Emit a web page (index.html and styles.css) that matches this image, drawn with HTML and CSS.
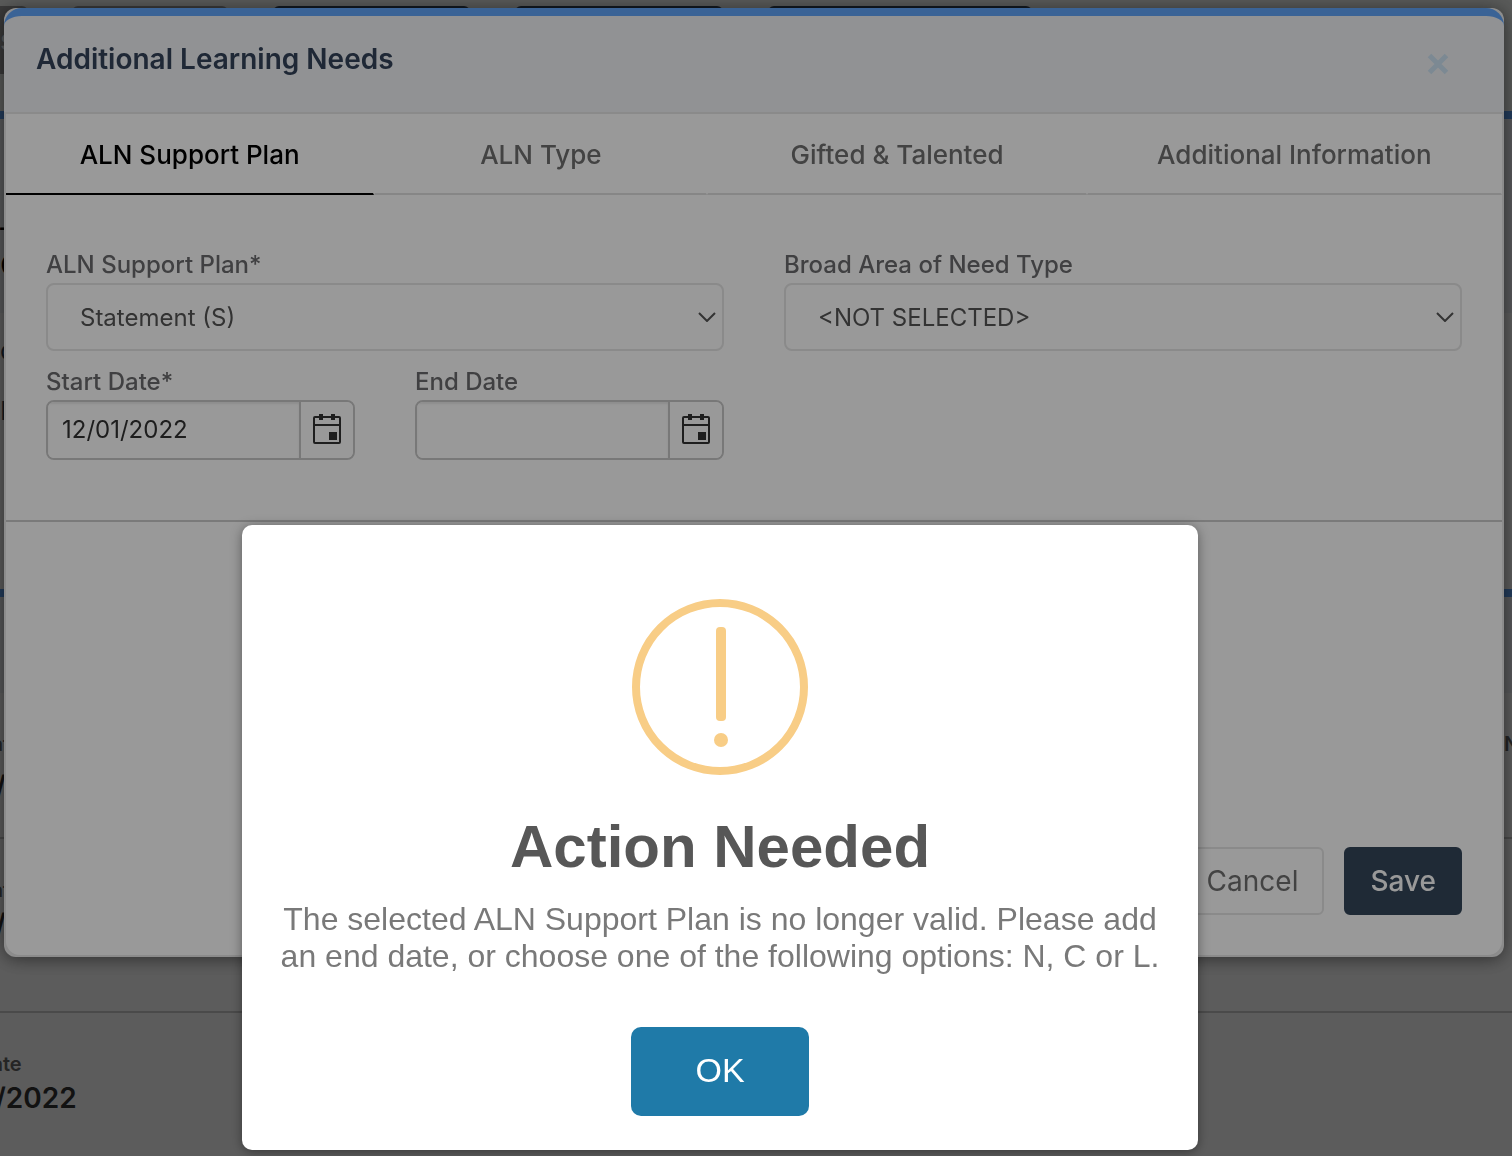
FILE: index.html
```
<!DOCTYPE html>
<html lang="en">
<head>
    <meta charset="UTF-8">
    <meta name="viewport" content="width=device-width, initial-scale=1.0">
    <title>Additional Learning Needs</title>
    <link rel="stylesheet" href="styles.css">
</head>
<body>

    <!-- Page behind the modal -->
    <main class="page">
        <div class="toolbar">
            <button class="tool tool-first" type="button">s</button>
            <button class="tool tool-grey" type="button" aria-label="Previous"></button>
            <button class="tool tool-a" type="button" aria-label="Edit"></button>
            <button class="tool tool-b" type="button" aria-label="Print"></button>
            <button class="tool tool-c" type="button" aria-label="Export"></button>
        </div>

        <section class="card">
            <div class="card-header">
                <span class="card-line">–</span>
                <span class="card-line">C</span>
            </div>
            <div class="card-body">
                <span>c</span>
                <span>I</span>
            </div>
        </section>

        <section class="card records">
            <div class="card-header short"></div>
            <div class="record first">
                <div class="record-cell"><span class="record-label">Start Date</span><span class="record-value">12/01/2022</span></div>
                <div class="record-cell last"><span class="record-label">N</span></div>
            </div>
            <div class="record">
                <div class="record-cell"><span class="record-label">Start Date</span><span class="record-value">12/01/2022</span></div>
            </div>
            <div class="record">
                <div class="record-cell"><span class="record-label">Start Date</span><span class="record-value">12/01/2022</span></div>
            </div>
        </section>
    </main>

    <!-- Modal -->
    <div class="backdrop">
        <div class="modal" role="dialog" aria-labelledby="modalTitle">
            <header class="modal-header">
                <h1 id="modalTitle">Additional Learning Needs</h1>
                <button class="close" type="button" aria-label="Close">
                    <svg width="22" height="22" viewBox="0 0 22 22"><path d="M2.5 2.5L19.5 19.5M19.5 2.5L2.5 19.5" fill="none" stroke="currentColor" stroke-width="5"/></svg>
                </button>
            </header>

            <div class="modal-content">
                <nav class="tabs">
                    <a class="active" href="#support-plan">ALN Support Plan</a>
                    <a href="#type">ALN Type</a>
                    <a href="#gifted">Gifted &amp; Talented</a>
                    <a href="#info">Additional Information</a>
                </nav>

                <form class="form" id="support-plan">
                    <div class="field wide">
                        <label for="plan">ALN Support Plan*</label>
                        <div class="select-box">
                            <select id="plan">
                                <option>Statement (S)</option>
                            </select>
                            <svg class="chevron" width="18" height="10" viewBox="0 0 18 10"><path d="M1 1L9 9L17 1" fill="none" stroke="currentColor" stroke-width="2"/></svg>
                        </div>
                    </div>
                    <div class="field wide">
                        <label for="need">Broad Area of Need Type</label>
                        <div class="select-box">
                            <select id="need">
                                <option>&lt;NOT SELECTED&gt;</option>
                            </select>
                            <svg class="chevron" width="18" height="10" viewBox="0 0 18 10"><path d="M1 1L9 9L17 1" fill="none" stroke="currentColor" stroke-width="2"/></svg>
                        </div>
                    </div>
                    <div class="field">
                        <label for="startDate">Start Date*</label>
                        <div class="date-box">
                            <input type="text" id="startDate" value="12/01/2022">
                            <button type="button" aria-label="Pick start date">
                                <svg width="28" height="30" viewBox="0 0 28 30"><rect x="1" y="3" width="26" height="26" rx="1" fill="none" stroke="currentColor" stroke-width="2"/><path d="M1 11H27" stroke="currentColor" stroke-width="2"/><path d="M6 0h4v6H6zM18 0h4v6h-4zM16 18h8v8h-8z" fill="currentColor"/></svg>
                            </button>
                        </div>
                    </div>
                    <div class="field">
                        <label for="endDate">End Date</label>
                        <div class="date-box">
                            <input type="text" id="endDate">
                            <button type="button" aria-label="Pick end date">
                                <svg width="28" height="30" viewBox="0 0 28 30"><rect x="1" y="3" width="26" height="26" rx="1" fill="none" stroke="currentColor" stroke-width="2"/><path d="M1 11H27" stroke="currentColor" stroke-width="2"/><path d="M6 0h4v6H6zM18 0h4v6h-4zM16 18h8v8h-8z" fill="currentColor"/></svg>
                            </button>
                        </div>
                    </div>
                </form>

                <footer class="modal-footer">
                    <button class="btn btn-cancel" type="button">Cancel</button>
                    <button class="btn btn-save" type="button">Save</button>
                </footer>
            </div>
        </div>
    </div>

    <!-- Alert -->
    <div class="alert-overlay">
        <div class="alert" role="alertdialog" aria-labelledby="alertTitle">
            <svg class="alert-icon" width="176" height="176" viewBox="0 0 176 176">
                <circle cx="88" cy="88" r="84" fill="none" stroke="#f8cd86" stroke-width="8"/>
                <rect x="84" y="28" width="10" height="94" rx="4" fill="#f8cd86"/>
                <circle cx="89" cy="141" r="7" fill="#f8cd86"/>
            </svg>
            <h2 id="alertTitle">Action Needed</h2>
            <p>The selected ALN Support Plan is no longer valid. Please add an end date, or choose one of the following options: N, C or L.</p>
            <button class="alert-ok" type="button">OK</button>
        </div>
    </div>

</body>
</html>
```
FILE: styles.css
```
* {
    box-sizing: border-box;
}

body {
    margin: 0;
    height: 100vh;
    overflow: hidden;
    font-family: Inter, sans-serif;
    background: #fff;
    color: #333;
}

button,
input,
select {
    font-family: inherit;
}

/* page behind */
.page {
    background: #fff;
}

.toolbar {
    display: flex;
    height: 111px;
    padding-top: 6px;
    background: #f5f8f5;
}

.tool {
    height: 68px;
    padding: 0;
    border: none;
    border-radius: 6px;
    background: #34465a;
    color: #fff;
    font-size: 28px;
}

.tool-first {
    width: 28px;
    margin-right: 44px;
    border-radius: 0 6px 0 0;
    background: #a0a0a0;
    text-align: left;
}

.tool-grey {
    width: 156px;
    margin-right: 45px;
    background: #a0a0a0;
}

.tool-a {
    width: 197px;
    margin-right: 45px;
}

.tool-b {
    width: 208px;
    margin-right: 45px;
}

.tool-c {
    width: 264px;
}

.card {
    border-top: 8px solid #5fa4fa;
}

.card-header {
    display: flex;
    flex-direction: column;
    gap: 2px;
    height: 194px;
    padding-top: 90px;
    background: #f0f3f7;
}

.card-line {
    font-size: 30px;
    line-height: 36px;
    color: #000;
}

.card-header.short {
    height: 96px;
    padding: 0;
}

.card-body {
    display: flex;
    flex-direction: column;
    gap: 24px;
    height: 226px;
    padding-top: 20px;
    font-size: 26px;
    line-height: 36px;
    color: #34465a;
}

.records {
    margin-top: 50px;
}

.record {
    display: flex;
    justify-content: space-between;
    height: 174px;
    padding-top: 39px;
    border-bottom: 2px solid #ccc;
}

.record.first {
    height: 146px;
}

.record-cell {
    display: flex;
    flex-direction: column;
    gap: 4px;
    margin-left: -75px;
    font-weight: 600;
}

.record-cell.last {
    width: 8px;
    margin-left: 0;
}

.first .record-cell {
    gap: 12px;
}

.record-label {
    font-size: 20px;
    line-height: 24px;
    color: #666;
}

.record-value {
    font-size: 28px;
    line-height: 36px;
    color: #333;
}

/* modal */
.backdrop {
    position: fixed;
    inset: 0;
    padding: 8px 8px 0 4px;
    background: rgba(0, 0, 0, 0.4);
}

.modal {
    overflow: hidden;
    border-radius: 12px;
    background: #ebebeb;
    box-shadow: 0 2px 18px rgba(0, 0, 0, 0.5);
}

.modal-header {
    display: flex;
    justify-content: space-between;
    align-items: center;
    height: 106px;
    padding: 0 55px 0 32px;
    border-top: 8px solid #61a5fa;
    border-bottom: 2px solid #e6e6e6;
    border-radius: 18px 18px 0 0;
    background: #f2f4f7;
}

.modal-header h1 {
    margin: 0;
    padding-bottom: 10px;
    font-size: 28px;
    font-weight: 600;
    line-height: 36px;
    color: #34435a;
}

.close {
    display: flex;
    padding: 0;
    border: none;
    background: none;
    color: #cfe4f5;
}

.modal-content {
    border: 2px solid #e8e8e8;
    border-top: none;
    border-radius: 0 0 16px 16px;
    background: #fff;
}

.tabs {
    display: grid;
    grid-template-columns: 368fr 333fr 379fr 415fr;
}

.tabs a {
    padding: 23px 0 20px;
    border: 1px solid transparent;
    border-top: none;
    border-bottom: 2px solid #e0e0e0;
    font-size: 26px;
    font-weight: 500;
    line-height: 36px;
    text-align: center;
    text-decoration: none;
    color: #707070;
}

.tabs a.active {
    border-left: none;
    border-bottom-color: #000;
    color: #000;
}

.form {
    display: grid;
    grid-template-columns: repeat(4, minmax(0, 1fr));
    gap: 13px 60px;
    padding: 52px 40px 60px;
    border-bottom: 2px solid #ccc;
}

.field.wide {
    grid-column: span 2;
}

.field label {
    display: block;
    font-size: 24px;
    font-weight: 500;
    line-height: 36px;
    color: #6c6c6e;
}

.select-box {
    position: relative;
}

.select-box select {
    display: block;
    width: 100%;
    height: 68px;
    padding: 0 48px 0 32px;
    border: 2px solid #e6e6e6;
    border-radius: 8px;
    appearance: none;
    background: #fff;
    font-size: 24px;
    color: #555;
}

.chevron {
    position: absolute;
    top: 29px;
    right: 8px;
    pointer-events: none;
    color: #555;
}

.date-box {
    display: flex;
    height: 60px;
    border: 2px solid #c8c8c8;
    border-radius: 8px;
    overflow: hidden;
}

.date-box input {
    flex: 1;
    min-width: 0;
    padding: 0 14px 2px;
    border: none;
    background: #fff;
    box-shadow: inset 0 2px 2px rgba(0, 0, 0, 0.08);
    font-size: 24px;
    color: #333;
}

.date-box button {
    display: flex;
    justify-content: center;
    align-items: center;
    width: 54px;
    padding: 0 0 2px;
    border: none;
    border-left: 2px solid #c8c8c8;
    background: #fff;
    color: #333;
}

.modal-footer {
    display: flex;
    justify-content: flex-end;
    gap: 20px;
    padding: 325px 40px 40px;
}

.btn {
    height: 68px;
    padding: 0 24px;
    border: 2px solid #e6e6e6;
    border-radius: 6px;
    background: #fff;
    font-size: 28px;
    color: #707070;
}

.btn-save {
    border-color: #34465a;
    background: #34465a;
    color: #fff;
    font-weight: 500;
}

/* alert */
.alert-overlay {
    position: fixed;
    inset: 0;
    display: flex;
    justify-content: center;
    align-items: flex-end;
    padding: 0 72px 6px 0;
    background: rgba(0, 0, 0, 0.4);
}

.alert {
    display: flex;
    flex-direction: column;
    align-items: center;
    width: 956px;
    max-width: 100%;
    padding: 74px 32px 34px;
    border-radius: 10px;
    background: #fff;
    box-shadow: 0 2px 12px rgba(0, 0, 0, 0.4);
    font-family: "Liberation Sans", Arial, sans-serif;
    text-align: center;
}

.alert h2 {
    margin: 32px 0 0;
    font-size: 60px;
    line-height: 80px;
    color: #575757;
}

.alert p {
    margin: 14px 0 0;
    font-size: 32px;
    line-height: 37px;
    color: #797979;
}

.alert-ok {
    width: 178px;
    height: 89px;
    margin-top: 52px;
    padding-bottom: 4px;
    border: none;
    border-radius: 10px;
    background: #1f7aa8;
    color: #fff;
    font-family: inherit;
    font-size: 34px;
}
```
